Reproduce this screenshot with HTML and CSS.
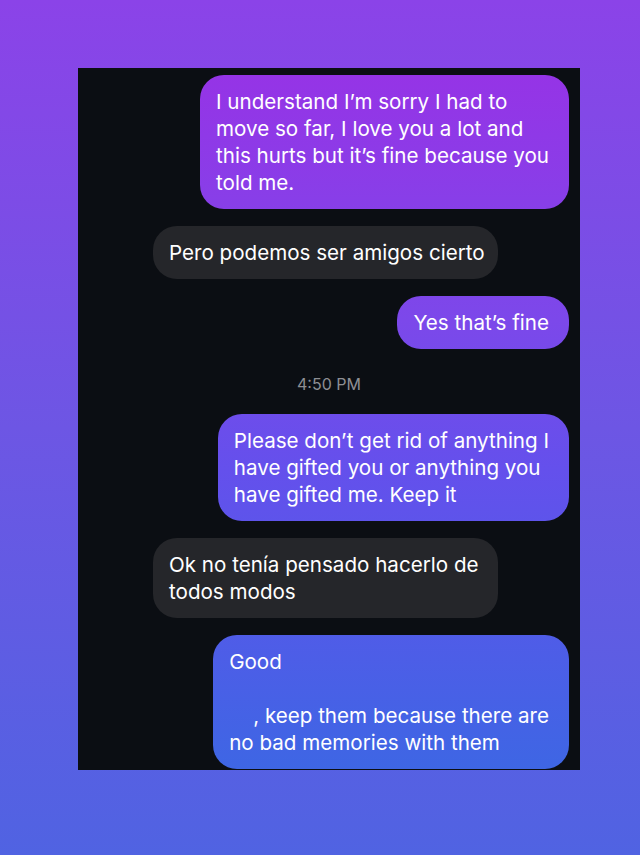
FILE: index.html
```html
<!DOCTYPE html>
<html lang="en">
<head>
    <meta charset="UTF-8">
    <meta name="viewport" content="width=device-width, initial-scale=1.0">
    <title>Messages</title>
    <link rel="stylesheet" href="styles.css">
</head>
<body>
    <div class="chat">
        <div class="bubble sent">I understand I’m sorry I had to<br>move so far, I love you a lot and<br>this hurts but it’s fine because you<br>told me.</div>
        <div class="bubble received">Pero podemos ser amigos cierto</div>
        <div class="bubble sent">Yes that’s fine</div>
        <div class="timestamp">4:50 PM</div>
        <div class="bubble sent">Please don’t get rid of anything I<br>have gifted you or anything you<br>have gifted me. Keep it</div>
        <div class="bubble received">Ok no tenía pensado hacerlo de<br>todos modos</div>
        <div class="bubble sent">Good<br><br><span class="gap"></span>, keep them because there are<br>no bad memories with them</div>
    </div>
</body>
</html>
```

FILE: styles.css
```css
body {
    margin: 0;
    min-height: 855px;
    background: linear-gradient(180deg, #8b43e8 0%, #6d56e4 50%, #5063e2 100%);
    font-family: Inter, "Noto Sans", sans-serif;
}
.chat {
    margin: 68px 0 0 78px;
    width: 502px;
    height: 702px;
    box-sizing: border-box;
    padding: 7px 11px 0 75px;
    background: #0b0e13;
    overflow: hidden;
    display: flex;
    flex-direction: column;
    gap: 17px;
}
.bubble {
    width: fit-content;
    box-sizing: border-box;
    padding: 13px 20px 13px 16px;
    border-radius: 24px;
    font-size: 20.6px;
    line-height: 27px;
    color: #fff;
}
.sent {
    align-self: flex-end;
    background: linear-gradient(180deg, #9534e6 75px, #7c48ea 320px, #6450ec 470px, #3e66e4 770px) fixed;
}
.received {
    align-self: flex-start;
    min-width: 345px;
    padding-right: 13px;
    background: #25262a;
}
.timestamp {
    margin: 8px -11px 3px -75px;
    text-align: center;
    font-size: 16px;
    line-height: 20px;
    color: #8e8e93;
}
.gap {
    display: inline-block;
    width: 24px;
}
```
